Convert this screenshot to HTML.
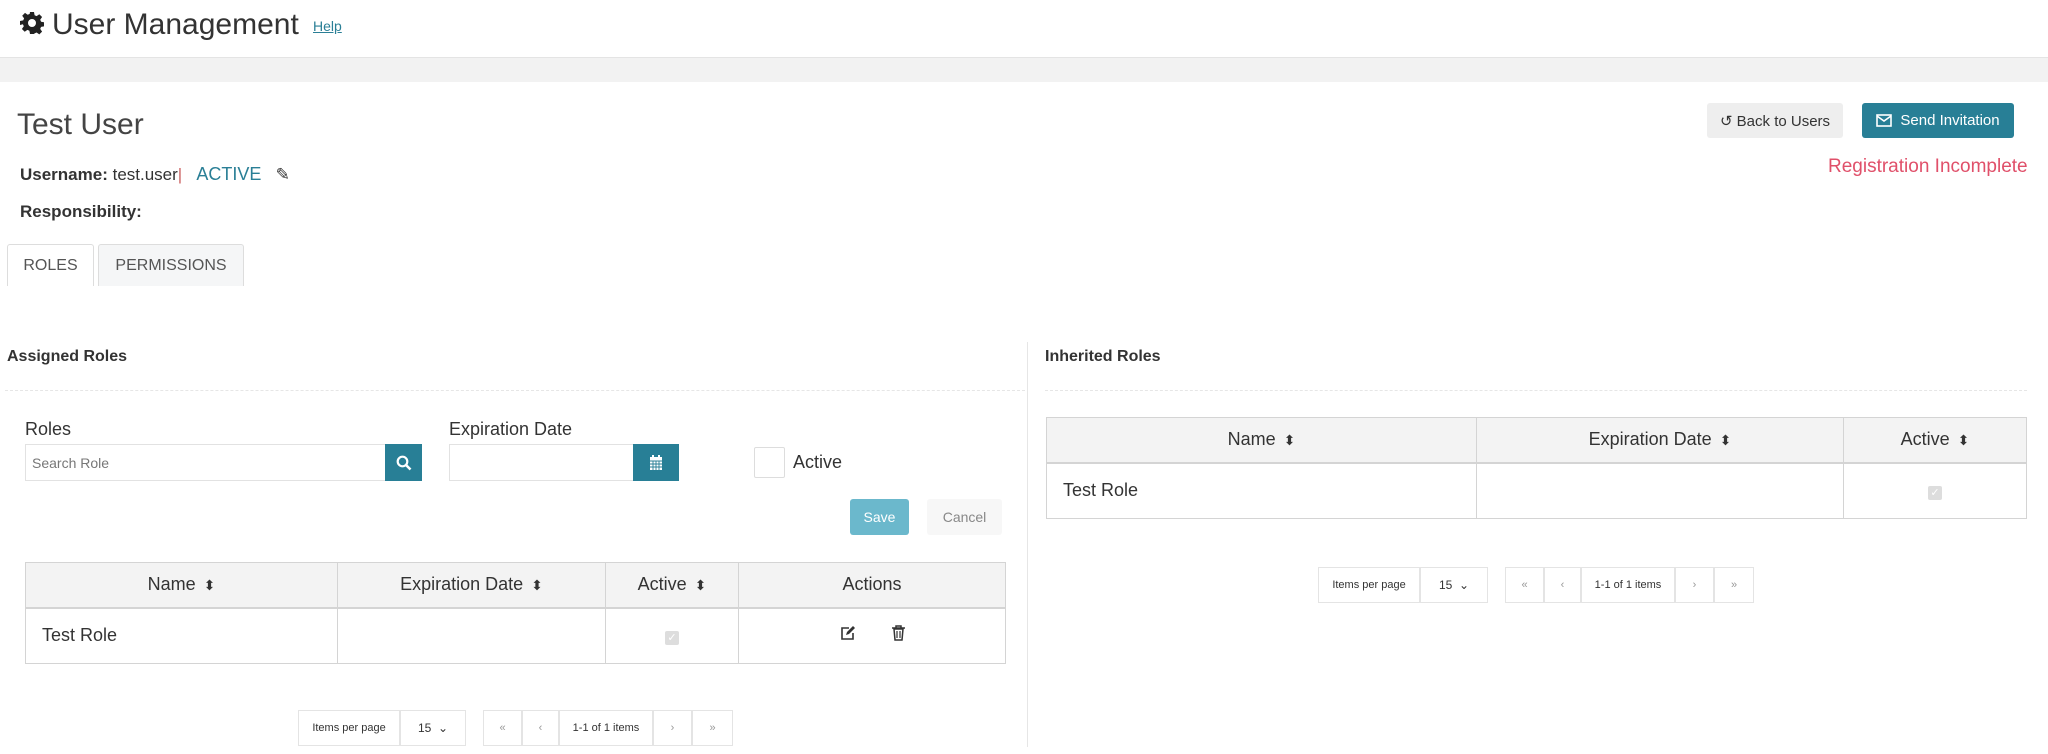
<!DOCTYPE html>
<html><head><meta charset="utf-8"><style>
*{box-sizing:border-box;margin:0;padding:0}
body{width:2048px;height:754px;position:relative;overflow:hidden;background:#fff;font-family:"Liberation Sans",sans-serif;color:#333}
.a{position:absolute;white-space:nowrap}
.btn{position:absolute;display:flex;align-items:center;justify-content:center;border-radius:3px;font-size:15px}
.tb{position:absolute;border:1px solid #ccc;border-collapse:collapse}
.tb td{border:1px solid #d4d4d4;font-size:18px;color:#333}
.tb th{border:1px solid #d4d4d4;border-bottom:2px solid #d4d4d4;background:#f3f3f3;font-weight:normal;font-size:18px;color:#333}
.pg{position:absolute;display:flex;font-size:11px;color:#333}
.pg div{border:1px solid #e4e4e4;display:flex;align-items:center;justify-content:center;height:100%}
.sort{font-size:14px;margin-left:8px}
</style></head><body>
<svg class="a" style="left:20px;top:11px" width="24" height="24" viewBox="0 0 24 24"><path fill="#222" d="M10 1h4l.6 3.2 2 .9 2.7-1.9 2.8 2.8-1.9 2.7.9 2 3.2.6v4l-3.2.6-.9 2 1.9 2.7-2.8 2.8-2.7-1.9-2 .9L14 23h-4l-.6-3.2-2-.9-2.7 1.9-2.8-2.8 1.9-2.7-.9-2L0 14v-4l3.2-.6.9-2L2.2 4.7 5 1.9l2.7 1.9 2-.9z M12 8a4 4 0 1 0 0 8 4 4 0 1 0 0-8z" fill-rule="evenodd"/></svg>
<div class="a" style="left:52px;top:8px;font-size:30px;color:#333">User Management</div>
<div class="a" style="left:313px;top:18px;font-size:14px;color:#2a7f96;text-decoration:underline">Help</div>
<div class="a" style="left:0;top:57px;width:2048px;height:25px;background:#f2f2f2;border-top:1px solid #e4e4e4"></div>
<div class="a" style="left:17px;top:108px;font-size:30px;color:#444">Test User</div>
<div class="btn" style="left:1707px;top:103px;width:136px;height:35px;background:#eee;color:#333">↺ Back to Users</div>
<div class="btn" style="left:1862px;top:103px;width:152px;height:35px;background:#287f96;color:#fff"><svg width="16" height="13" viewBox="0 0 16 13" style="margin-right:8px"><rect x="1" y="1" width="14" height="11" fill="none" stroke="#fff" stroke-width="1.6"/><path d="M1 2l7 5 7-5" fill="none" stroke="#fff" stroke-width="1.6"/></svg>Send Invitation</div>
<div class="a" style="left:1828px;top:156px;font-size:19px;color:#e0506a">Registration Incomplete</div>
<div class="a" style="left:20px;top:164px;font-size:17px"><b>Username:</b> test.user<span style="color:#c66">|</span> &nbsp; <b style="color:#2a7f96;font-weight:normal;font-size:18px">ACTIVE</b> &nbsp;&nbsp;✎</div>
<div class="a" style="left:20px;top:202px;font-size:17px;font-weight:bold">Responsibility:</div>
<div class="a" style="left:7px;top:244px;width:87px;height:42px;border:1px solid #ddd;border-bottom:none;border-radius:3px 3px 0 0;font-size:16px;color:#555;display:flex;align-items:center;justify-content:center;background:#fff">ROLES</div>
<div class="a" style="left:98px;top:244px;width:146px;height:42px;border:1px solid #ddd;border-bottom:none;border-radius:3px 3px 0 0;font-size:16px;color:#555;display:flex;align-items:center;justify-content:center;background:#f5f6f7">PERMISSIONS</div>
<div class="a" style="left:7px;top:348px;font-size:16px;font-weight:bold">Assigned Roles</div>
<div class="a" style="left:5px;top:390px;width:1020px;border-top:1px dashed #e6e6e6"></div>
<div class="a" style="left:1027px;top:342px;width:1px;height:405px;background:#e6e6e6"></div>
<div class="a" style="left:1045px;top:348px;font-size:16px;font-weight:bold">Inherited Roles</div>
<div class="a" style="left:1045px;top:390px;width:982px;border-top:1px dashed #e6e6e6"></div>
<div class="a" style="left:25px;top:419px;font-size:18px">Roles</div>
<div class="a" style="left:25px;top:444px;width:361px;height:37px;border:1px solid #e2e2e2;font-size:14px;color:#777;padding:10px 6px">Search Role</div>
<div class="a" style="left:385px;top:444px;width:37px;height:37px;background:#287f96;display:flex;align-items:center;justify-content:center"><svg width="16" height="16" viewBox="0 0 16 16"><circle cx="6.5" cy="6.5" r="4.8" fill="none" stroke="#fff" stroke-width="2.2"/><path d="M10 10l4.5 4.5" stroke="#fff" stroke-width="2.6"/></svg></div>
<div class="a" style="left:449px;top:419px;font-size:18px">Expiration Date</div>
<div class="a" style="left:449px;top:444px;width:185px;height:37px;border:1px solid #e2e2e2"></div>
<div class="a" style="left:633px;top:444px;width:46px;height:37px;background:#287f96;display:flex;align-items:center;justify-content:center"><svg width="14" height="16" viewBox="0 0 14 16"><rect x="1" y="2" width="12" height="13" fill="#fff"/><path d="M1 6h12M1 9h12M1 12h12M4 6v9M7 6v9M10 6v9" stroke="#287f96" stroke-width=".9"/><rect x="3" y="0" width="2" height="4" fill="#fff"/><rect x="9" y="0" width="2" height="4" fill="#fff"/></svg></div>
<div class="a" style="left:754px;top:447px;width:31px;height:31px;border:1px solid #ddd;border-radius:2px"></div>
<div class="a" style="left:793px;top:452px;font-size:18px">Active</div>
<div class="btn" style="left:850px;top:499px;width:59px;height:36px;background:#6bb8cc;color:#fff;font-size:14px">Save</div>
<div class="btn" style="left:927px;top:499px;width:75px;height:36px;background:#f7f7f7;color:#888;font-size:14px">Cancel</div>
<table class="tb" style="left:25px;top:562px;width:981px;height:102px">
<tr style="height:45px"><th style="width:312px">Name<span class="sort">⬍</span></th><th style="width:268px">Expiration Date<span class="sort">⬍</span></th><th style="width:133px">Active<span class="sort">⬍</span></th><th>Actions</th></tr>
<tr><td style="padding-left:16px">Test Role</td><td></td><td style="text-align:center"><span style="display:inline-block;width:14px;height:14px;background:#ddd;border-radius:2px;color:#fff;font-size:11px;line-height:14px">✓</span></td><td style="text-align:center"><svg width="16" height="16" viewBox="0 0 16 16" style="margin-right:36px"><path d="M9 3H2v11h11V8" fill="none" stroke="#333" stroke-width="1.6"/><path d="M6 10l1-3 6-6 2 2-6 6z" fill="#333"/></svg><svg width="13" height="16" viewBox="0 0 13 16"><path d="M0 3h13M4 3V1h5v2" fill="none" stroke="#333" stroke-width="1.5"/><path d="M2 4h9l-1 11H3z" fill="none" stroke="#333" stroke-width="1.5"/><path d="M5 6v7M8 6v7" stroke="#333" stroke-width="1.2"/></svg></td></tr>
</table>
<div class="pg" style="left:298px;top:710px;height:36px"><div style="width:102px">Items per page</div><div style="width:66px;font-size:12px">15 &nbsp;⌄</div></div>
<div class="pg" style="left:483px;top:710px;height:36px;color:#999"><div style="width:39px">«</div><div style="width:37px">‹</div><div style="width:94px;color:#333">1-1 of 1 items</div><div style="width:39px">›</div><div style="width:41px">»</div></div>
<table class="tb" style="left:1046px;top:417px;width:981px;height:102px">
<tr style="height:45px"><th style="width:430px">Name<span class="sort">⬍</span></th><th style="width:367px">Expiration Date<span class="sort">⬍</span></th><th>Active<span class="sort">⬍</span></th></tr>
<tr><td style="padding-left:16px">Test Role</td><td></td><td style="text-align:center"><span style="display:inline-block;width:14px;height:14px;background:#ddd;border-radius:2px;color:#fff;font-size:11px;line-height:14px">✓</span></td></tr>
</table>
<div class="pg" style="left:1318px;top:567px;height:36px"><div style="width:102px">Items per page</div><div style="width:68px;font-size:12px">15 &nbsp;⌄</div></div>
<div class="pg" style="left:1505px;top:567px;height:36px;color:#999"><div style="width:39px">«</div><div style="width:37px">‹</div><div style="width:94px;color:#333">1-1 of 1 items</div><div style="width:39px">›</div><div style="width:40px">»</div></div>
</body></html>
